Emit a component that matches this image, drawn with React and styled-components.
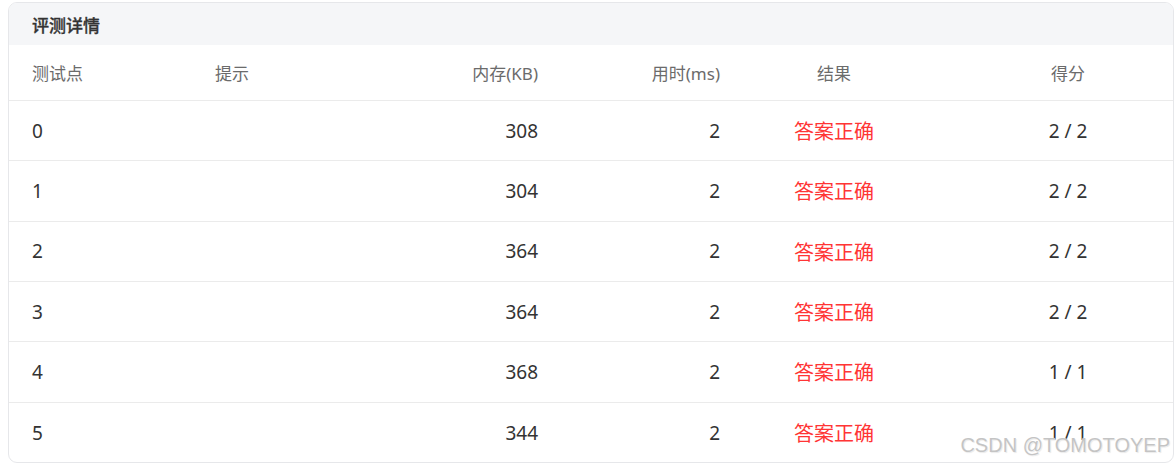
import React from 'react'
import styled, { createGlobalStyle } from 'styled-components'

const GlobalStyle = createGlobalStyle`
  body {
    margin: 2px 0 0 8px;
    background: #fff;
    font-family: "Noto Sans", "Noto Sans CJK SC", sans-serif;
  }
`

const Card = styled.div`
  position: relative;
  width: 1166px;
  height: 461px;
  box-sizing: border-box;
  border: 1px solid #e6e7ea;
  border-radius: 9px;
  overflow: hidden;
`

const Title = styled.div`
  height: 42px;
  background: #f5f6f8;
  display: flex;
  align-items: center;
  padding-left: 23px;
  font-size: 17px;
  font-weight: 500;
  color: #333;
  -webkit-text-stroke: 0.3px #333;
`

const Grid = styled.div`
  display: grid;
  grid-template-columns: 183px 140px 183px 182px 228px 1fr;
  align-items: center;
  padding-left: 23px;
  height: ${p => p.$h}px;
  box-sizing: border-box;
  border-bottom: ${p => (p.$last ? 'none' : '1px solid #ebebeb')};
  font-size: ${p => (p.$head ? '17px' : '19px')};
  color: ${p => (p.$head ? '#6b6b6b' : '#333')};
`

const Cell = styled.div`
  white-space: nowrap;
  text-align: ${p => p.$align || 'left'};
  padding-left: ${p => p.$pl || 0}px;
  color: ${p => (p.$ok ? '#ff3535' : 'inherit')};
  font-size: ${p => (p.$ok ? '20px' : 'inherit')};
`

const Watermark = styled.div`
  position: absolute;
  right: 3px;
  bottom: 5px;
  font-family: "Liberation Sans", Arial, sans-serif;
  font-size: 20px;
  color: #c4c4c4;
  text-shadow: 0 0 1px #fff, 1px 1px 1px #e8e8e8;
  pointer-events: none;
`

const rows = [
  { id: 0, mem: 308, time: 2, score: '2 / 2' },
  { id: 1, mem: 304, time: 2, score: '2 / 2' },
  { id: 2, mem: 364, time: 2, score: '2 / 2' },
  { id: 3, mem: 364, time: 2, score: '2 / 2' },
  { id: 4, mem: 368, time: 2, score: '1 / 1' },
  { id: 5, mem: 344, time: 2, score: '1 / 1' },
]

export default function App() {
  return (
    <>
      <GlobalStyle />
      <Card>
        <Title>评测详情</Title>
        <Grid $head $h={56}>
          <Cell>测试点</Cell>
          <Cell>提示</Cell>
          <Cell $align="right">内存(KB)</Cell>
          <Cell $align="right">用时(ms)</Cell>
          <Cell $align="center">结果</Cell>
          <Cell $align="center" $pl={15}>得分</Cell>
        </Grid>
        {rows.map((r, i) => (
          <Grid key={r.id} $h={60.33} $last={i === rows.length - 1}>
            <Cell>{r.id}</Cell>
            <Cell />
            <Cell $align="right">{r.mem}</Cell>
            <Cell $align="right">{r.time}</Cell>
            <Cell $align="center" $ok>答案正确</Cell>
            <Cell $align="center" $pl={15}>{r.score}</Cell>
          </Grid>
        ))}
        <Watermark>CSDN @TOMOTOYEP</Watermark>
      </Card>
    </>
  )
}
